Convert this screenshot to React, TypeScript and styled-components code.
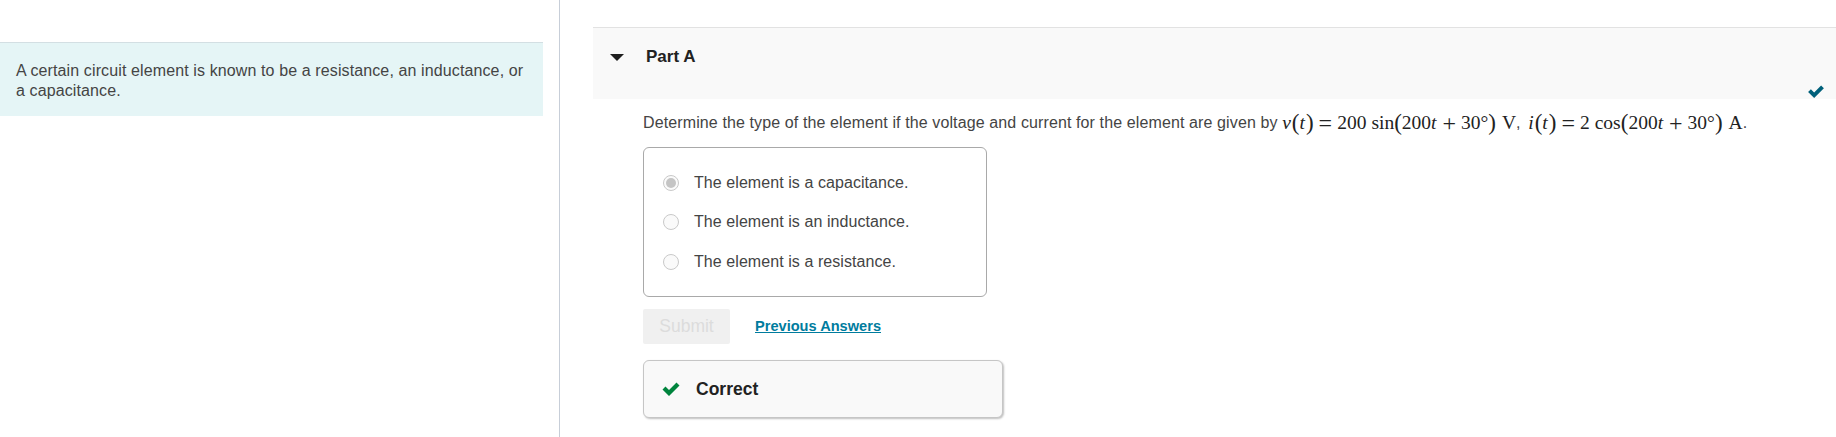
import styled, { createGlobalStyle } from 'styled-components'

const GlobalStyle = createGlobalStyle`
	html, body {
		margin: 0;
		padding: 0;
		background: #ffffff;
	}
	body {
		font-family: "Liberation Sans", Arial, sans-serif;
		color: #444444;
	}
`

const Page = styled.div`
	display: flex;
	width: 1836px;
	height: 437px;
	overflow: hidden;
`

const IntroColumn = styled.div`
	width: 560px;
	flex: none;
	padding-top: 42px;
	box-sizing: border-box;
	border-right: 1px solid #c7ced8;
	height: 100%;
`

const IntroNote = styled.div`
	width: 543px;
	height: 74px;
	box-sizing: border-box;
	padding: 18px 16px 0 16px;
	background: #e5f5f6;
	border-top: 1px solid #d3dfe3;
	font-size: 16px;
	line-height: 20px;
	letter-spacing: 0.115px;
`

const PartColumn = styled.div`
	flex: 1;
	padding: 27px 0 0 33px;
	min-width: 0;
`

const PartHeader = styled.div`
	display: flex;
	justify-content: space-between;
	height: 72px;
	box-sizing: border-box;
	padding: 19px 12px 1px 17px;
	background: #f9f9f9;
	border-top: 1px solid #e2e2e2;
`

const PartTitle = styled.h2`
	display: flex;
	align-items: center;
	gap: 22px;
	height: 20px;
	margin: 0;
	font-size: 17px;
	font-weight: 700;
	color: #222222;
`

const Triangle = styled.span`
	width: 0;
	height: 0;
	border-left: 7px solid transparent;
	border-right: 7px solid transparent;
	border-top: 7px solid #1f1f1f;
`

const DoneIcon = styled.svg`
	width: 16px;
	height: 13px;
	align-self: flex-end;
	fill: #00607a;
`

const PartBody = styled.div`
	padding: 12px 0 0 50px;
`

const Question = styled.p`
	display: flex;
	align-items: center;
	height: 24px;
	margin: 0;
	font-size: 16px;
	letter-spacing: 0.115px;
	white-space: pre;
`

const MathRun = styled.span<{ $gap?: number }>`
	display: inline-flex;
	align-items: center;
	margin-left: ${props => props.$gap ?? 0}px;
	font-family: "Liberation Serif", "DejaVu Serif", serif;
	font-size: 19.5px;
	letter-spacing: 0;
	color: #222222;
	white-space: pre;
`

const MathVar = styled.i`
	font-style: italic;
	margin-right: 1px;
`

const MathParen = styled.span`
	font-size: 23px;
	font-weight: 400;
	line-height: 24px;
`

const MathOp = styled.span`
	margin: 0 5px;
	font-size: 24px;
	line-height: 24px;
`

const MathWord = styled.span<{ $gap?: number }>`
	margin-left: ${props => props.$gap ?? 0}px;
`

const ChoiceBox = styled.div`
	display: flex;
	flex-direction: column;
	width: 344px;
	height: 150px;
	box-sizing: border-box;
	margin-top: 12px;
	padding: 15px 0 0 19px;
	border: 1px solid #a9a9a9;
	border-radius: 6px;
`

const Choice = styled.label`
	display: flex;
	align-items: center;
	gap: 15px;
	height: 39.5px;
	font-size: 16px;
	letter-spacing: 0.07px;
	color: #444444;
`

const Radio = styled.span<{ $checked?: boolean }>`
	display: flex;
	align-items: center;
	justify-content: center;
	width: 16px;
	height: 16px;
	box-sizing: border-box;
	border: 1px solid #c9c9c9;
	border-radius: 50%;
	background: #fafafa;
	&::after {
		content: '';
		display: ${props => (props.$checked ? 'block' : 'none')};
		width: 10px;
		height: 10px;
		border-radius: 50%;
		background: #c4c4c4;
	}
`

const Actions = styled.div`
	display: flex;
	align-items: center;
	gap: 25px;
	margin-top: 12px;
`

const SubmitButton = styled.button`
	width: 87px;
	height: 35px;
	padding: 0;
	border: none;
	border-radius: 2px;
	background: #f0f0f0;
	font-family: inherit;
	font-size: 17.5px;
	color: #dcdcdc;
`

const AnswersLink = styled.a`
	position: relative;
	top: -1px;
	font-size: 14.6px;
	font-weight: 700;
	color: #007c9e;
	text-decoration: underline;
`

const Feedback = styled.div`
	display: flex;
	align-items: center;
	gap: 16px;
	width: 360px;
	height: 58px;
	box-sizing: border-box;
	margin-top: 16px;
	padding-left: 18px;
	background: #f9f9f9;
	border: 1px solid #c6c6c6;
	border-radius: 6px;
	box-shadow: 1px 1px 2px #c0c0c0;
	font-size: 17.5px;
	font-weight: 700;
	color: #222222;
`

const FeedbackIcon = styled.svg`
	width: 18px;
	height: 14px;
	fill: #00843d;
`

const CHECK_PATH = 'M0 7.5 L3 4.5 L6.5 8 L14 0.5 L17 3.5 L6.5 14 Z'

const choices = [
	{ label: 'The element is a capacitance.', checked: true },
	{ label: 'The element is an inductance.', checked: false },
	{ label: 'The element is a resistance.', checked: false },
]

export default function App() {
	return (
		<Page>
			<GlobalStyle />
			<IntroColumn>
				<IntroNote>
					A certain circuit element is known to be a resistance, an inductance, or a
					capacitance.
				</IntroNote>
			</IntroColumn>
			<PartColumn>
				<PartHeader>
					<PartTitle>
						<Triangle />
						Part A
					</PartTitle>
					<DoneIcon viewBox="0 0 17 14">
						<path d={CHECK_PATH} />
					</DoneIcon>
				</PartHeader>
				<PartBody>
					<Question>
						{'Determine the type of the element if the voltage and current for the element are given by '}
						<MathRun>
							<MathVar>v</MathVar>
							<MathParen>(</MathParen>
							<MathVar>t</MathVar>
							<MathParen>)</MathParen>
							<MathOp>=</MathOp>
							200
							<MathWord $gap={5}>sin</MathWord>
							<MathParen>(</MathParen>
							200<MathVar>t</MathVar>
							<MathOp>+</MathOp>
							30°
							<MathParen>)</MathParen>
							<MathWord $gap={6}>V</MathWord>
						</MathRun>
						{', '}
						<MathRun $gap={3}>
							<MathVar>i</MathVar>
							<MathParen>(</MathParen>
							<MathVar>t</MathVar>
							<MathParen>)</MathParen>
							<MathOp>=</MathOp>
							2
							<MathWord $gap={5}>cos</MathWord>
							<MathParen>(</MathParen>
							200<MathVar>t</MathVar>
							<MathOp>+</MathOp>
							30°
							<MathParen>)</MathParen>
							<MathWord $gap={6}>A</MathWord>
						</MathRun>
						.
					</Question>
					<ChoiceBox>
						{choices.map(choice => (
							<Choice key={choice.label}>
								<Radio $checked={choice.checked} />
								{choice.label}
							</Choice>
						))}
					</ChoiceBox>
					<Actions>
						<SubmitButton disabled>Submit</SubmitButton>
						<AnswersLink href="#">Previous Answers</AnswersLink>
					</Actions>
					<Feedback>
						<FeedbackIcon viewBox="0 0 17 14">
							<path d={CHECK_PATH} />
						</FeedbackIcon>
						Correct
					</Feedback>
				</PartBody>
			</PartColumn>
		</Page>
	)
}
